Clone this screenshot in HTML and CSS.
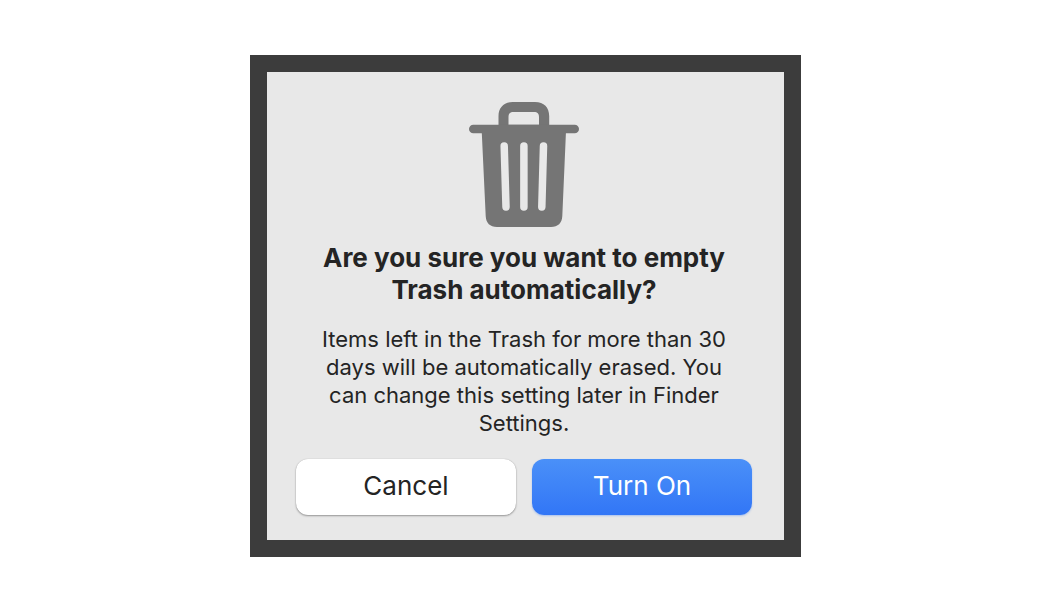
FILE: index.html
```html
<!DOCTYPE html>
<html lang="en">
<head>
    <meta charset="UTF-8">
    <meta name="viewport" content="width=device-width, initial-scale=1.0">
    <title>Empty Trash</title>
    <link rel="stylesheet" href="styles.css">
</head>
<body>
    <div class="dialog" role="alertdialog" aria-labelledby="dialogTitle" aria-describedby="dialogText">
        <svg class="trash-icon" width="110" height="125" viewBox="0 0 110 125" aria-hidden="true">
            <!-- handle -->
            <path fill="#757575" fill-rule="evenodd" d="M29.5 24V14C29.5 5.500 35 0 43.500 0H66C75 0 80.200 5.500 80.200 14V24ZM39.500 22.700H70V15C70 11.500 68.500 10 65 10H44.500C41 10 39.500 11.500 39.500 15Z"/>
            <!-- lid -->
            <rect fill="#757575" y="22.700" width="110" height="8.600" rx="4.300"/>
            <!-- can -->
            <path fill="#757575" d="M12.700 29H97L93.300 114C93 121 89 125 82 125H28C21 125 17 121 16.700 114Z"/>
            <path stroke="#e8e8e8" stroke-width="7.500" stroke-linecap="round" d="M35.200 44L37 105M54.900 44V105M74.500 44L72.800 105"/>
        </svg>
        <h1 class="title" id="dialogTitle">Are you sure you want to empty Trash automatically?</h1>
        <p class="message" id="dialogText">Items left in the Trash for more than 30 days will be automatically erased. You can change this setting later in Finder Settings.</p>
        <div class="actions">
            <button type="button" class="btn">Cancel</button>
            <button type="button" class="btn btn-primary">Turn On</button>
        </div>
    </div>
</body>
</html>
```
FILE: styles.css
```css
body{
    margin: 0;
    min-height: 100vh;
    display: flex;
    align-items: center;
    justify-content: center;
    background-color: #fff;
    font-family: Inter, "Liberation Sans", sans-serif;
    color: #242424;
}

.dialog{
    display: flex;
    flex-direction: column;
    align-items: center;
    box-sizing: border-box;
    width: 100%;
    max-width: 551px;
    padding: 30px 32px 25px 29px;
    border: 17px solid #3c3c3c;
    background-color: #e8e8e8;
    text-align: center;
}

.trash-icon{
    display: block;
}

.title{
    max-width: 420px;
    margin: 15px 0 19px;
    font-size: 26px;
    line-height: 32px;
    font-weight: 700;
}

.message{
    max-width: 420px;
    margin: 0 0 22px;
    font-size: 22px;
    line-height: 28px;
}

.actions{
    display: flex;
    gap: 16px;
    width: 100%;
}

.btn{
    flex: 1;
    box-sizing: border-box;
    height: 56px;
    padding: 0 0 4px;
    border: 0;
    border-radius: 12px;
    background-color: #fff;
    box-shadow: 0 1px 2px rgba(0, 0, 0, 0.35), 0 0 1px rgba(0, 0, 0, 0.2);
    font-family: inherit;
    font-size: 26px;
    color: #242424;
}

.btn-primary{
    background: linear-gradient(#4a90f8, #3276f6);
    box-shadow: 0 1px 2px rgba(50, 118, 246, 0.35);
    color: #fff;
}
```
